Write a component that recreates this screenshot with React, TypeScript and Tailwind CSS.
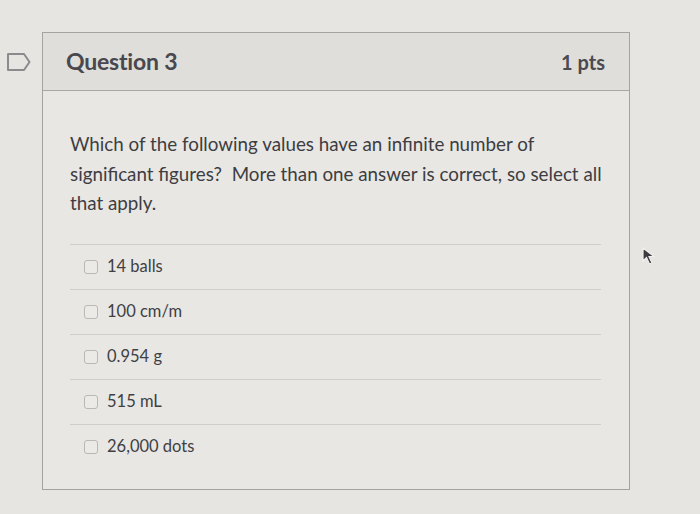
const answers = ["14 balls", "100 cm/m", "0.954 g", "515 mL", "26,000 dots"];

function FlagIcon() {
  return (
    <svg width="26" height="20" viewBox="0 0 26 20" fill="none">
      <path d="M2 2 H18 L23.5 10 L18 18 H2 Z" stroke="#8b8b8d" strokeWidth="2" strokeLinejoin="round" />
    </svg>
  );
}

function Cursor() {
  return (
    <svg width="14" height="18" viewBox="0 0 14 18" className="absolute left-[642px] top-[247px]">
      <path d="M1 1 L1 14 L4.5 10.5 L7.5 17 L10 16 L7 9.5 L12 9.5 Z" fill="#3b3b40" stroke="#f1efec" strokeWidth="1.2" />
    </svg>
  );
}

export default function App() {
  return (
    <div className="relative w-[700px] h-[514px] overflow-hidden bg-[#e6e5e1] font-['Lato','Liberation_Sans',sans-serif] text-[#3c3c40]">
      <div className="flex pt-[32px]">
        <div className="w-[42px] pt-[20px] pl-[6px]">
          <FlagIcon />
        </div>
        <div className="w-[588px] h-[458px] border border-[#a3a3a1] bg-[#e8e7e3] flex flex-col">
          <div className="h-[58px] flex items-center justify-between pl-[23px] pr-[24px] bg-[#dfdeda] border-b border-[#a8a7a4]">
            <h2 className="text-[23px] font-bold text-[#48484e] tracking-[-0.2px]">Question 3</h2>
            <span className="text-[20px] font-bold text-[#4a4a50]">1 pts</span>
          </div>
          <div className="pl-[27px] pr-[20px] pt-[38px]">
            <p className="text-[18.8px] leading-[29.5px] text-[#3d3d42] whitespace-nowrap">
              Which of the following values have an infinite number of
              <br />
              significant figures?&nbsp; More than one answer is correct, so select all
              <br />
              that apply.
            </p>
            <div className="mt-[26px] w-[531px]">
              {answers.map((a) => (
                <label key={a} className="flex items-center h-[45px] border-t border-[#cfcecb] pl-[14px] gap-[9px]">
                  <span className="w-[14px] h-[14px] rounded-[3px] border border-[#b9b8b5] bg-[#ebeae6]" />
                  <span className="text-[16.5px] text-[#3f3f44]">{a}</span>
                </label>
              ))}
            </div>
          </div>
        </div>
      </div>
      <Cursor />
    </div>
  );
}
